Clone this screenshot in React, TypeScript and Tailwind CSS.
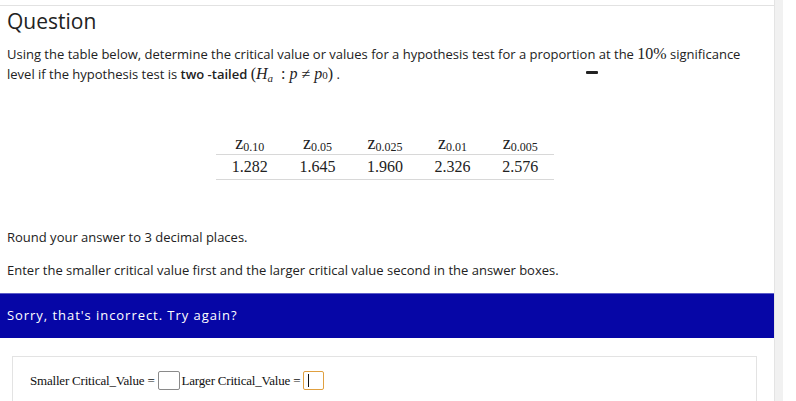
import React from "react";

const sans = { fontFamily: '"Open Sans", "Noto Sans", sans-serif' };
const serif = { fontFamily: '"Liberation Serif", "Times New Roman", serif' };

function Z({ sub }: { sub: string }) {
  return (
    <span className="text-[18px] text-[#222]" style={serif}>
      z<span className="text-[12px] relative top-[2px]">{sub}</span>
    </span>
  );
}

export default function App() {
  const subs = ["0.10", "0.05", "0.025", "0.01", "0.005"];
  const vals = ["1.282", "1.645", "1.960", "2.326", "2.576"];
  return (
    <div className="w-[796px] h-[401px] bg-white overflow-hidden flex" style={sans}>
      <div className="w-[775px] pt-[5px] border-r border-[#e4e4e4]">
        <div className="border-t border-[#e2e2e2]">
          <div className="pl-[7px] pt-[2px] text-[21px] leading-[26px] text-[#222]">Question</div>
          <div className="pl-[7px] pt-[10px] text-[13px] leading-[20px] text-[#222]">
            <div>
              Using the table below, determine the critical value or values for a hypothesis test for a proportion at the{" "}
              <span className="text-[16px]" style={serif}>10%</span> significance
            </div>
            <div className="relative">
              level if the hypothesis test is <span className="font-semibold">two -tailed</span>{" "}
              <span className="text-[16px]" style={serif}>
                (<i>H</i>
                <sub className="text-[11px]">
                  <i>a</i>
                </sub>
                &nbsp;&nbsp;: <i>p</i> ≠ <i>p</i>
                <span className="text-[11px]">0</span>)
              </span>{" "}
              .
              <span className="absolute left-[579px] top-[7px] w-[12px] h-[3px] bg-[#222] rounded-[1px]" />
            </div>
          </div>
          <div className="pl-[216px] pt-[48px]">
            <div className="w-[338px]">
              <div className="grid grid-cols-5 h-[22px] items-center border-b border-[#d8d8d8] text-center">
                {subs.map((s) => (
                  <div key={s} className="leading-[18px]">
                    <Z sub={s} />
                  </div>
                ))}
              </div>
              <div
                className="grid grid-cols-5 h-[25px] items-center border-b border-[#d8d8d8] text-center text-[16px] text-[#222]"
                style={serif}
              >
                {vals.map((v) => (
                  <div key={v}>{v}</div>
                ))}
              </div>
            </div>
          </div>
          <div className="pl-[7px] pt-[47px] text-[13px] leading-[20px] text-[#222]">
            Round your answer to 3 decimal places.
          </div>
          <div className="pl-[7px] pt-[13px] text-[13px] leading-[20px] text-[#222]">
            Enter the smaller critical value first and the larger critical value second in the answer boxes.
          </div>
          <div className="mt-[13px] h-[45px] bg-[#0606a6] border-t border-[#5d5dc8] flex items-center pl-[7px] text-white text-[13px] tracking-[0.95px]">
            Sorry, that's incorrect. Try again?
          </div>
          <div className="pl-[12px] pr-[17px] pt-[18px]">
            <div className="border border-[#e3e3e3] h-[60px] pt-[14px] pl-[17px]">
              <div className="flex items-center text-[13px] text-[#111] tracking-[-0.2px]" style={serif}>
                <span>Smaller Critical_Value =</span>
                <span className="ml-[3px] w-[22px] h-[19px] border border-[#8a8a8a] rounded-[2px] bg-white" />
                <span className="ml-[2px]">Larger Critical_Value =</span>
                <span className="ml-[3px] w-[21px] h-[19px] border border-[#e0a040] rounded-[2px] bg-white flex items-center pl-[4px]">
                  <span className="w-[1px] h-[13px] bg-[#111]" />
                </span>
              </div>
            </div>
          </div>
        </div>
      </div>
      <div className="w-[8px] bg-[#f1f1f1]" />
    </div>
  );
}
